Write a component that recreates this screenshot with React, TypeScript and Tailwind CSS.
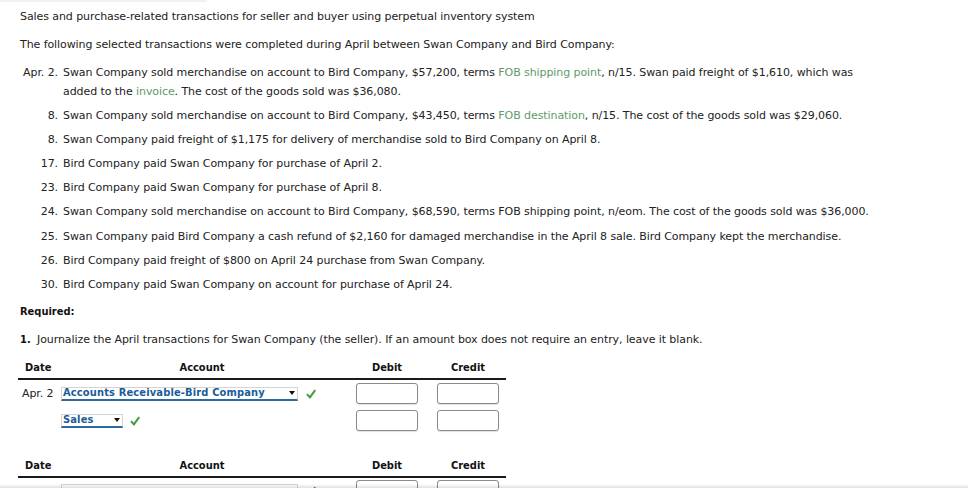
import React from 'react';

const FONT = "font-['DejaVu_Sans',sans-serif]";
const BOLD = "font-['DejaVu_Sans_Condensed','DejaVu_Sans',sans-serif] font-bold tracking-normal";

function G({ children }: { children: React.ReactNode }) {
  return <span className="text-[#5f9a68]">{children}</span>;
}

function Check() {
  return (
    <svg width="10" height="10" viewBox="0 0 10 10" className="shrink-0">
      <path d="M1 5.2 L3.9 8.4 L9.2 1.2" fill="none" stroke="#3f9c3f" strokeWidth="2" />
    </svg>
  );
}

function Select({ label, className, filled = true }: { label: string; className: string; filled?: boolean }) {
  return (
    <div
      className={`flex h-[14px] items-center justify-between border border-[#d4d4d4] ${
        filled ? 'border-b-2 border-b-[#2c6aa0]' : ''
      } pl-[1px] pr-[2px] text-[11px] leading-[12px] text-[#1b5c99] ${BOLD} ${className}`}
    >
      <span className="whitespace-nowrap tracking-[0.15px]">{label}</span>
      <svg width="6" height="4" viewBox="0 0 6 4" className="shrink-0">
        <path d="M0 0 L6 0 L3 4 Z" fill="#111" />
      </svg>
    </div>
  );
}

function Box() {
  return <div className="h-[21px] w-[62px] rounded-[3px] border border-[#8a8a8a] bg-white shadow-[0_1px_1px_rgba(0,0,0,0.12)]" />;
}

function Header() {
  return (
    <div className={`grid grid-cols-[42px_284px_86px_76px] border-b-2 border-[#1a1a1a] pb-[1px] leading-[19px] text-[#111] ${BOLD}`}>
      <div className="pl-[7px]">Date</div>
      <div className="text-center">Account</div>
      <div className="text-center">Debit</div>
      <div className="text-center">Credit</div>
    </div>
  );
}

function Row({ date, select }: { date?: string; select: React.ReactNode }) {
  return (
    <div className="grid h-[21px] grid-cols-[42px_284px_86px_76px] items-center">
      <div className="whitespace-nowrap pl-[4px] leading-[19px]">{date}</div>
      <div className="flex items-center pl-[1px]">{select}</div>
      <div className="flex justify-center">
        <Box />
      </div>
      <div className="flex justify-center">
        <Box />
      </div>
    </div>
  );
}

const items: { n: string; c: React.ReactNode }[] = [
  {
    n: 'Apr. 2.',
    c: (
      <>
        Swan Company sold merchandise on account to Bird Company, $57,200, terms <G>FOB shipping point</G>, n/15. Swan paid freight of $1,610, which was
        <br />
        added to the <G>invoice</G>. The cost of the goods sold was $36,080.
      </>
    ),
  },
  {
    n: '8.',
    c: (
      <>
        Swan Company sold merchandise on account to Bird Company, $43,450, terms <G>FOB destination</G>, n/15. The cost of the goods sold was $29,060.
      </>
    ),
  },
  { n: '8.', c: <>Swan Company paid freight of $1,175 for delivery of merchandise sold to Bird Company on April 8.</> },
  { n: '17.', c: <>Bird Company paid Swan Company for purchase of April 2.</> },
  { n: '23.', c: <>Bird Company paid Swan Company for purchase of April 8.</> },
  {
    n: '24.',
    c: <>Swan Company sold merchandise on account to Bird Company, $68,590, terms FOB shipping point, n/eom. The cost of the goods sold was $36,000.</>,
  },
  {
    n: '25.',
    c: <>Swan Company paid Bird Company a cash refund of $2,160 for damaged merchandise in the April 8 sale. Bird Company kept the merchandise.</>,
  },
  { n: '26.', c: <>Bird Company paid freight of $800 on April 24 purchase from Swan Company.</> },
  { n: '30.', c: <>Bird Company paid Swan Company on account for purchase of April 24.</> },
];

export default function App() {
  return (
    <div className={`relative h-[488px] w-[968px] overflow-hidden bg-white text-[11px] tracking-[-0.08px] text-[#222] ${FONT}`}>
      <div className="h-[2px] w-[207px] bg-[#f1f1f1]" />
      <div className="pl-[20px]">
        <div className="mt-[4.5px] leading-[19px]">
          Sales and purchase-related transactions for seller and buyer using perpetual inventory system
        </div>
        <div className="mt-[9.5px] leading-[19px]">
          The following selected transactions were completed during April between Swan Company and Bird Company:
        </div>
        <div className="mt-[8.5px] flex flex-col gap-[5.2px]">
          {items.map((it, i) => (
            <div key={i} className="flex leading-[19px]">
              <div className="w-[38px] shrink-0 whitespace-nowrap text-right">{it.n}</div>
              <div className="ml-[5px] whitespace-nowrap">{it.c}</div>
            </div>
          ))}
        </div>
        <div className={`mt-[8px] leading-[19px] text-[#111] ${BOLD}`}>Required:</div>
        <div className="mt-[9.3px] flex leading-[19px]">
          <span className={`w-[17px] text-[#111] ${BOLD}`}>1.</span>
          <span>
            Journalize the April transactions for Swan Company (the seller). If an amount box does not require an entry, leave it blank.
          </span>
        </div>
      </div>
      <div className="ml-[18px] w-[488px]">
        <div className="mt-[9px]">
          <Header />
          <div className="mt-[3px] flex flex-col gap-[6px]">
            <Row
              date="Apr. 2"
              select={
                <>
                  <Select label="Accounts Receivable-Bird Company" className="w-[237px]" />
                  <span className="ml-[8px]">
                    <Check />
                  </span>
                </>
              }
            />
            <Row
              select={
                <>
                  <Select label="Sales" className="w-[62px]" />
                  <span className="ml-[7px]">
                    <Check />
                  </span>
                </>
              }
            />
          </div>
        </div>
        <div className="mt-[25px]">
          <Header />
          <div className="mt-[2px] flex flex-col gap-[6px]">
            <Row
              select={
                <>
                  <Select label="" className="w-[237px]" filled={false} />
                  <span className="ml-[8px]">
                    <Check />
                  </span>
                </>
              }
            />
          </div>
        </div>
      </div>
      <div className="pointer-events-none absolute bottom-0 left-0 h-[4px] w-full bg-gradient-to-b from-[rgba(0,0,0,0)] to-[rgba(0,0,0,0.12)]" />
    </div>
  );
}
